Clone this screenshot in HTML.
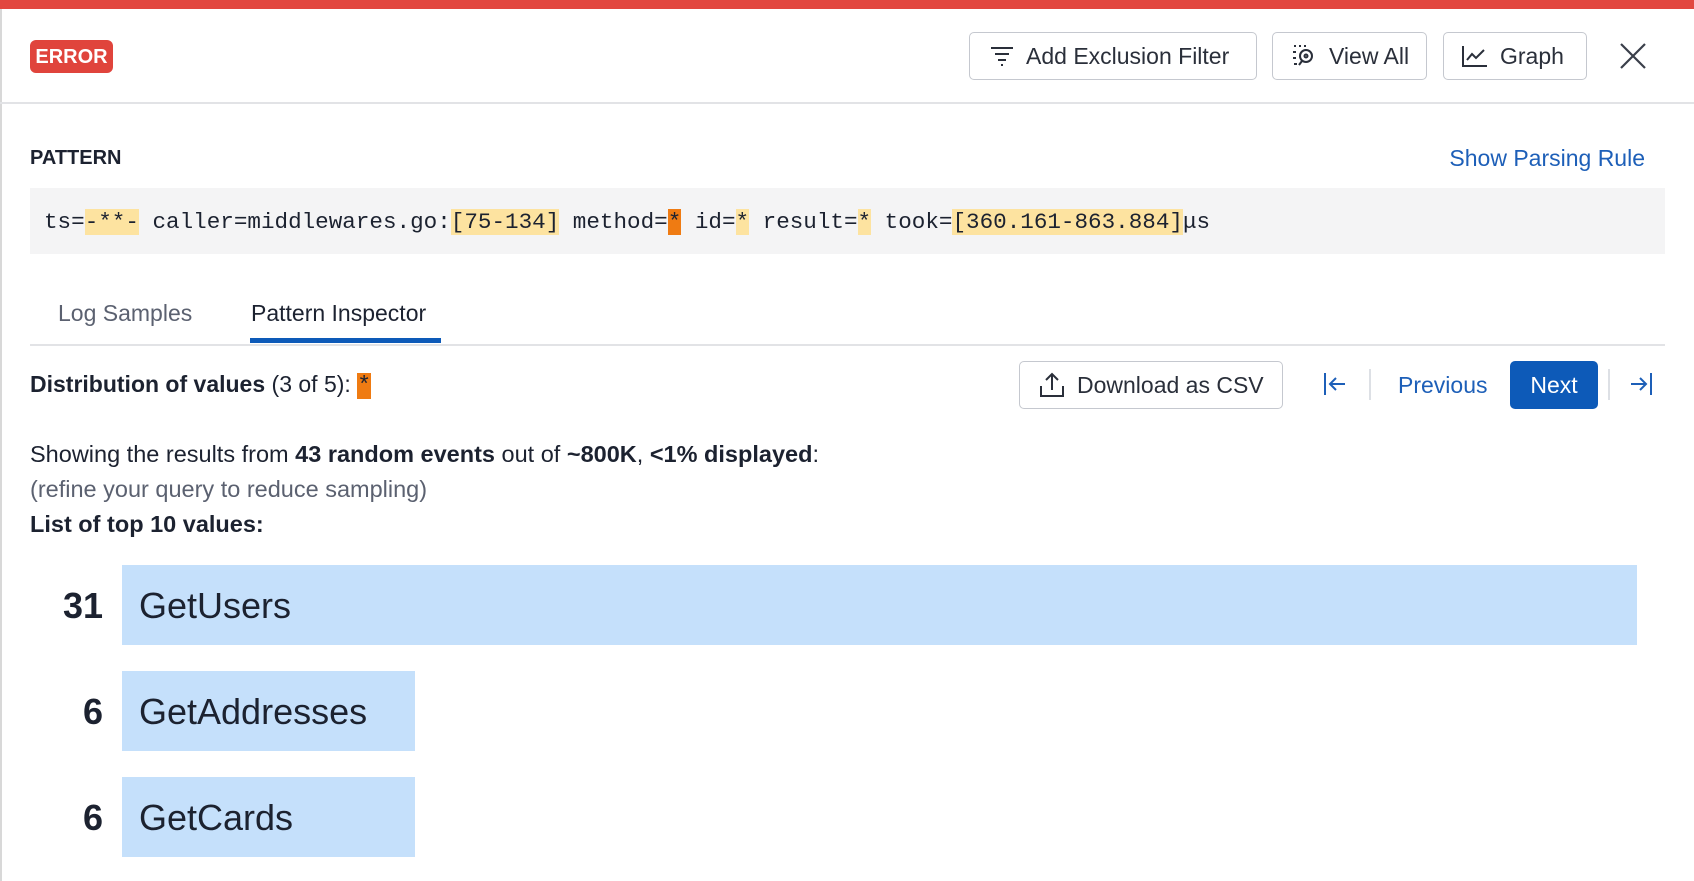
<!DOCTYPE html>
<html><head><meta charset="utf-8"><style>
*{box-sizing:border-box;margin:0;padding:0}
body{width:1694px;height:881px;overflow:hidden;background:#fff;font-family:"Liberation Sans",sans-serif;color:#1c2230;position:relative}
.a{position:absolute}
.btn{position:absolute;border:1.5px solid #c5c8cf;border-radius:5px;background:#fff;display:flex;align-items:center;font-size:23px;color:#2a2f3a}
.btn svg{margin-right:12px}
.mono{font-family:"Liberation Mono",monospace;font-size:22.6px;white-space:pre}
.h{background:#fde3a0}
.o{background:#ef7b12}
.bar{position:absolute;left:122px;background:#c5e0fb;height:80px;font-size:36px;line-height:82px;padding-left:17px;color:#1c2230}
.num{position:absolute;width:90px;left:13px;text-align:right;font-size:36px;font-weight:bold;line-height:82px}
</style></head><body>
<div class="a" style="left:0;top:0;width:1694px;height:9px;background:#e2473f"></div>
<div class="a" style="left:0;top:9px;width:2px;height:872px;background:#d8d8d8"></div>
<div class="a" style="left:30px;top:40px;width:83px;height:33px;background:#e0443c;border-radius:6px;color:#fff;font-weight:bold;font-size:20px;line-height:34px;text-align:center">ERROR</div>

<div class="btn" style="left:969px;top:32px;width:288px;height:48px;padding-left:20px">
<svg width="24" height="22" viewBox="0 0 24 22" fill="none" stroke="#2a2f3a" stroke-width="2"><path d="M1 3h22M5 9h14M8 15h8M11 20h2"/></svg>Add Exclusion Filter</div>
<div class="btn" style="left:1272px;top:32px;width:155px;height:48px;padding-left:18px">
<svg width="26" height="24" viewBox="0 0 26 24" fill="none" stroke="#2a2f3a" stroke-width="2"><path d="M3 2h2M8 2h2M13 2h2M2 8h3M2 14h3M3 20h3"/><circle cx="15" cy="12" r="6"/><circle cx="15" cy="12" r="1.5"/><path d="M11 17l-3 4"/></svg>View All</div>
<div class="btn" style="left:1443px;top:32px;width:144px;height:48px;padding-left:18px">
<svg width="26" height="22" viewBox="0 0 26 22" fill="none" stroke="#2a2f3a" stroke-width="2"><path d="M1 1v20h24M5 15l5-6 4 4 8-8"/></svg>Graph</div>
<svg class="a" style="left:1620px;top:43px" width="26" height="26" viewBox="0 0 26 26" stroke="#3a3f4a" stroke-width="2.2"><path d="M1 1l24 24M25 1L1 25"/></svg>

<div class="a" style="left:0;top:102px;width:1694px;height:2px;background:#e2e3e6"></div>

<div class="a" style="left:30px;top:147px;font-weight:bold;font-size:20px">PATTERN</div>
<div class="a" style="right:49px;top:145px;font-size:23px;color:#1d5fb8">Show Parsing Rule</div>

<div class="a" style="left:30px;top:188px;width:1635px;height:66px;background:#f4f4f5"></div>
<div class="a mono" style="left:44px;top:209px">ts=<span class="h">-**-</span> caller=middlewares.go:<span class="h">[75-134]</span> method=<span class="o">*</span> id=<span class="h">*</span> result=<span class="h">*</span> took=<span class="h">[360.161-863.884]</span>μs</div>

<div class="a" style="left:58px;top:300px;font-size:23px;color:#5b6170">Log Samples</div>
<div class="a" style="left:251px;top:300px;font-size:23px;color:#1c2230">Pattern Inspector</div>
<div class="a" style="left:30px;top:344px;width:1635px;height:2px;background:#e2e3e6"></div>
<div class="a" style="left:250px;top:338px;width:191px;height:5px;background:#0d5ab8"></div>

<div class="a" style="left:30px;top:371px;font-size:23px"><b>Distribution of values</b> (3 of 5): <span style="background:#ef7b12;font-family:'Liberation Mono',monospace">*</span></div>

<div class="btn" style="left:1019px;top:361px;width:264px;height:48px;padding-left:19px">
<svg width="26" height="26" viewBox="0 0 26 26" fill="none" stroke="#2a2f3a" stroke-width="2"><path d="M13 18V2M7 8l6-6 6 6M2 14v10h22V14"/></svg>Download as CSV</div>
<svg class="a" style="left:1323px;top:372px" width="24" height="24" viewBox="0 0 24 24" fill="none" stroke="#1d5fb8" stroke-width="2"><path d="M2 1v22M22 12H7M13 6l-6 6 6 6"/></svg>
<div class="a" style="left:1369px;top:369px;width:2px;height:31px;background:#dde0e5"></div>
<div class="a" style="left:1398px;top:372px;font-size:23px;color:#1d5fb8">Previous</div>
<div class="a" style="left:1510px;top:361px;width:88px;height:48px;background:#0d5ab8;border-radius:5px;color:#fff;font-size:23px;line-height:48px;text-align:center">Next</div>
<div class="a" style="left:1608px;top:369px;width:2px;height:31px;background:#dde0e5"></div>
<svg class="a" style="left:1629px;top:372px" width="24" height="24" viewBox="0 0 24 24" fill="none" stroke="#1d5fb8" stroke-width="2"><path d="M22 1v22M2 12h15M11 6l6 6-6 6"/></svg>

<div class="a" style="left:30px;top:437px;font-size:23.5px;line-height:35px">Showing the results from <b>43 random events</b> out of <b>~800K</b>, <b>&lt;1% displayed</b>:<br><span style="color:#5b6170">(refine your query to reduce sampling)</span><br><b>List of top 10 values:</b></div>

<div class="num" style="top:565px">31</div>
<div class="bar" style="top:565px;width:1515px">GetUsers</div>
<div class="num" style="top:671px">6</div>
<div class="bar" style="top:671px;width:293px">GetAddresses</div>
<div class="num" style="top:777px">6</div>
<div class="bar" style="top:777px;width:293px">GetCards</div>
</body></html>
